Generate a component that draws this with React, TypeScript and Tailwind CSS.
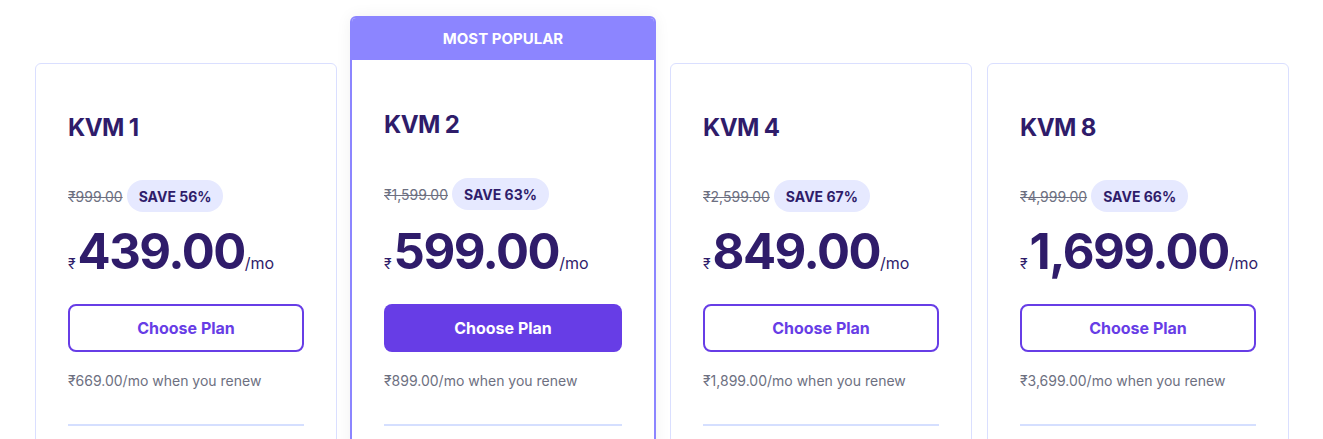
import React from 'react';

type Plan = {
  name: string;
  oldPrice: string;
  save: string;
  price: string;
  renew: string;
  popular?: boolean;
};

const plans: Plan[] = [
  { name: 'KVM 1', oldPrice: '₹999.00', save: 'SAVE 56%', price: '439.00', renew: '₹669.00/mo when you renew' },
  { name: 'KVM 2', oldPrice: '₹1,599.00', save: 'SAVE 63%', price: '599.00', renew: '₹899.00/mo when you renew', popular: true },
  { name: 'KVM 4', oldPrice: '₹2,599.00', save: 'SAVE 67%', price: '849.00', renew: '₹1,899.00/mo when you renew' },
  { name: 'KVM 8', oldPrice: '₹4,999.00', save: 'SAVE 66%', price: '1,699.00', renew: '₹3,699.00/mo when you renew' },
];

function PlanBody({ plan }: { plan: Plan }) {
  return (
    <div className="flex flex-col px-8">
      <h3 className="text-[24px] leading-8 font-bold text-[#2f1c6a] tracking-[-0.6px]">{plan.name}</h3>

      {/* Old price + discount */}
      <div className={plan.popular ? 'mt-[37px] flex items-center gap-1' : 'mt-9 flex items-center gap-1'}>
        <span className="text-[14px] text-[#6d7081] line-through">{plan.oldPrice}</span>
        <span className="flex h-8 items-center rounded-full bg-[#e6e9ff] px-3 text-[14px] font-bold text-[#2f1c6a]">
          {plan.save}
        </span>
      </div>

      {/* Current price */}
      <div className={plan.popular ? 'mt-[14px] flex items-baseline text-[#2f1c6a]' : 'mt-3 flex items-baseline text-[#2f1c6a]'}>
        <span className="mr-0.5 text-[14px]">₹</span>
        <span className="text-[49px] leading-[56px] font-bold tracking-[-1.5px]">{plan.price}</span>
        <span className="text-[16px]">/mo</span>
      </div>

      <button
        className={
          plan.popular
            ? 'mt-6 h-12 rounded-lg bg-[#673de6] text-[16px] font-bold text-white'
            : 'mt-6 h-12 rounded-lg border-2 border-[#673de6] bg-white text-[16px] font-bold text-[#673de6]'
        }
      >
        Choose Plan
      </button>

      <p className="mt-[19px] text-[14px] leading-5 text-[#6d7081]">{plan.renew}</p>

      <div className="mt-[33px] h-0.5 bg-[#d5dfff]" />
      <div className="h-8" />
    </div>
  );
}

export default function App() {
  return (
    <div
      className="h-[439px] overflow-hidden bg-white"
      style={{ fontFamily: 'Inter, "Noto Sans", sans-serif' }}
    >
      <div className="flex items-start gap-[14px] pl-[35px] pt-4">
        {plans.map((plan, i) =>
          plan.popular ? (
            <div
              key={plan.name}
              className="-ml-px w-[306px] shrink-0 overflow-hidden rounded-md border-2 border-[#8c85ff] bg-white shadow-[0_0_16px_rgba(0,0,0,0.06)]"
            >
              <div className="flex h-[42px] items-center justify-center bg-[#8c85ff] text-[15px] font-bold text-white">
                MOST POPULAR
              </div>
              <div className="pt-[49px]">
                <PlanBody plan={plan} />
              </div>
            </div>
          ) : (
            <div
              key={plan.name}
              className={
                i === 3
                  ? 'ml-px mt-[47px] w-[302px] shrink-0 rounded-md border border-[#dadfff] bg-white pt-12'
                  : 'mt-[47px] w-[302px] shrink-0 rounded-md border border-[#dadfff] bg-white pt-12'
              }
            >
              <PlanBody plan={plan} />
            </div>
          )
        )}
      </div>
    </div>
  );
}
